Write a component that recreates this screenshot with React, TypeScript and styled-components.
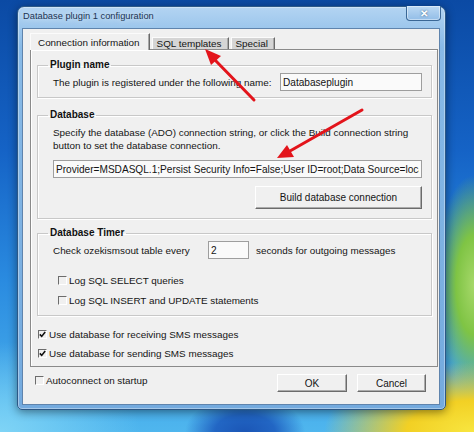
import React from 'react';
import styled, { createGlobalStyle } from 'styled-components';

const GlobalStyle = createGlobalStyle`
  html, body {
    margin: 0;
    padding: 0;
  }
  body {
    font-family: "Liberation Sans", Arial, sans-serif;
    color: #141414;
  }
`;

const Desktop = styled.div`
  position: relative;
  width: 474px;
  height: 432px;
  overflow: hidden;
  box-sizing: border-box;
  padding: 6px 0 0 17px;
  background:
    radial-gradient(ellipse 150px 70px at 100% 100%, #f8e640 0%, #f2d024 45%, rgba(242, 208, 36, 0) 100%),
    radial-gradient(ellipse 60px 36px at 245px 432px, #1b56b6 0%, #2266c4 50%, rgba(34, 102, 196, 0) 100%),
    radial-gradient(ellipse 40px 110px at 100% 285px, #a6d86a 0%, #7fc444 45%, rgba(127, 196, 68, 0) 100%),
    radial-gradient(ellipse 140px 90px at 0% 100%, #7fd4f6 0%, rgba(127, 212, 246, 0) 100%),
    linear-gradient(180deg, #0b4aa4 0%, #1563c6 35%, #2a8be0 65%, #4fb6ee 100%);
`;

const Window = styled.div`
  width: 429px;
  height: 404px;
  box-sizing: border-box;
  border: 1px solid #2c5886;
  border-radius: 7px 7px 5px 5px;
  background: linear-gradient(180deg, #b3d4f2 0%, #88bae7 10%, #74aade 100%);
  box-shadow: inset 0 0 0 1px rgba(255, 255, 255, 0.35), 0 2px 10px rgba(0, 0, 0, 0.45);
  display: flex;
  flex-direction: column;
`;

const TitleBar = styled.div`
  height: 21px;
  display: flex;
  justify-content: space-between;
  align-items: flex-start;
  padding: 0 4px 0 5px;
`;

const Title = styled.span`
  margin-top: 3px;
  font-size: 9.3px;
  line-height: 12px;
  color: #1b3352;
  text-shadow: 0 0 6px rgba(255, 255, 255, 0.8);
`;

const CloseButton = styled.div`
  width: 35px;
  height: 15px;
  margin-top: -1px;
  box-sizing: border-box;
  border: 1px solid #3a6796;
  border-top: none;
  border-radius: 0 0 4px 4px;
  background: linear-gradient(180deg, #bcd9f4 0%, #92bde7 100%);
  box-shadow: inset 0 0 0 1px rgba(255, 255, 255, 0.45);
  display: flex;
  align-items: center;
  justify-content: center;
  color: #fff;
  font-size: 10px;
  font-weight: bold;
  text-shadow: 0 0 2px #33597f;
`;

const Client = styled.div`
  margin: 0 5px 0 4px;
  height: 377px;
  box-sizing: border-box;
  border: 1px solid #5f84ad;
  background: #f0f0f0;
  display: flex;
  flex-direction: column;
  font-size: 9.9px;
`;

const TabStrip = styled.div`
  position: relative;
  z-index: 1;
  height: 20px;
  margin-left: 7px;
  display: flex;
  align-items: flex-end;
`;

const Tab = styled.div<{ $active?: boolean }>`
  box-sizing: border-box;
  line-height: 12px;
  white-space: nowrap;
  border-top: 1px solid #fbfbfb;
  border-left: 1px solid #fbfbfb;
  border-right: 1px solid #6a6a6a;
  height: ${(p) => (p.$active ? '17px' : '12px')};
  margin-bottom: ${(p) => (p.$active ? '-1px' : '0')};
  margin-left: ${(p) => (p.$active ? '0' : '2px')};
  padding: ${(p) => (p.$active ? '3px 9px 0 7px' : '0 6px 0 4px')};
  background: ${(p) => (p.$active ? '#f0f0f0' : '#d5d5d5')};
  box-shadow: inset -1px 0 0 #a8a8a8;
`;

const Panel = styled.div`
  width: 408px;
  height: 318px;
  margin-left: 7px;
  box-sizing: border-box;
  border: 1px solid #8a8a8a;
  box-shadow: inset 1px 1px 0 #fff;
  padding: 9px 5px 0 6px;
  display: flex;
  flex-direction: column;
`;

const Group = styled.fieldset<{ $gap?: number; $pt?: number; $pb?: number }>`
  margin: ${(p) => p.$gap ?? 0}px 0 0 0;
  min-width: 0;
  border: 1px solid #c8c8c8;
  box-shadow: inset 1px 1px 0 #fff, 1px 1px 0 #fff;
  padding: ${(p) => p.$pt ?? 2}px 9px ${(p) => p.$pb ?? 6}px 15px;
  display: flex;
  flex-direction: column;
`;

const Legend = styled.legend`
  margin-left: -5px;
  padding: 0 2px;
  font-size: 10px;
  font-weight: bold;
  line-height: 12px;
  color: #111;
`;

const Row = styled.div<{ $h?: number }>`
  display: flex;
  align-items: center;
  height: ${(p) => p.$h ?? 18}px;
`;

const Spread = styled(Row)`
  justify-content: space-between;
`;

const RightRow = styled(Row)`
  justify-content: flex-end;
  margin-top: 8px;
`;

const Info = styled.p`
  margin: 0;
  line-height: 13px;
`;

const Field = styled.input<{ $w?: number }>`
  width: ${(p) => (p.$w ? `${p.$w}px` : '100%')};
  height: 18px;
  box-sizing: border-box;
  margin: 0;
  padding: 0 2px;
  border: 1px solid #9e9e9e;
  background: #fafafa;
  font-family: "Liberation Sans", Arial, sans-serif;
  font-size: 10.1px;
  color: #141414;
  outline: none;
`;

const WideField = styled(Field)`
  margin-top: 8px;
  flex-shrink: 0;
`;

const FieldLabel = styled.span<{ $w?: number }>`
  width: ${(p) => (p.$w ? `${p.$w}px` : 'auto')};
  flex-shrink: 0;
`;

const After = styled.span`
  margin-left: 7px;
`;

const Button = styled.button<{ $w: number; $h: number }>`
  width: ${(p) => p.$w}px;
  height: ${(p) => p.$h}px;
  box-sizing: border-box;
  margin: 0;
  padding: 0;
  background: #f0f0f0;
  border: none;
  border-top: 1px solid #fff;
  border-left: 1px solid #fff;
  border-right: 1px solid #6b6b6b;
  border-bottom: 1px solid #6b6b6b;
  box-shadow: inset -1px -1px 0 #ababab;
  font-family: "Liberation Sans", Arial, sans-serif;
  font-size: 10px;
  color: #141414;
`;

const CheckRow = styled.label<{ $gap?: number; $indent?: number }>`
  display: flex;
  align-items: center;
  height: 16px;
  margin-top: ${(p) => p.$gap ?? 0}px;
  margin-left: ${(p) => p.$indent ?? 0}px;
  white-space: nowrap;
`;

const Box = styled.span`
  width: 9px;
  height: 9px;
  box-sizing: border-box;
  margin-right: 2px;
  border-top: 1px solid #6c6c6c;
  border-left: 1px solid #6c6c6c;
  border-right: 1px solid #fff;
  border-bottom: 1px solid #fff;
  display: inline-flex;
  align-items: center;
  justify-content: center;
`;

const Footer = styled.div`
  display: flex;
  align-items: flex-start;
  padding: 7px 13px 0 12px;
`;

const FooterCheck = styled(CheckRow)`
  height: 14px;
  margin-top: -1px;
`;

const Buttons = styled.div`
  display: flex;
  gap: 10px;
  margin-left: auto;
`;

const Overlay = styled.svg`
  position: absolute;
  left: 0;
  top: 0;
  pointer-events: none;
`;

const Check: React.FC<{ checked?: boolean; label: string; gap?: number; indent?: number; as?: 'footer' }> = ({
  checked,
  label,
  gap,
  indent,
  as,
}) => {
  const Wrap = as === 'footer' ? FooterCheck : CheckRow;
  return (
    <Wrap $gap={gap} $indent={indent}>
      <Box>
        {checked && (
          <svg width="7" height="7" viewBox="0 0 7 7">
            <path d="M0.8 3.4 L2.7 5.4 L6.2 1" fill="none" stroke="#111" strokeWidth="1.6" />
          </svg>
        )}
      </Box>
      {label}
    </Wrap>
  );
};

const App: React.FC = () => {
  return (
    <Desktop>
      <GlobalStyle />
      <Window>
        <TitleBar>
          <Title>Database plugin 1 configuration</Title>
          <CloseButton>✕</CloseButton>
        </TitleBar>
        <Client>
          <TabStrip>
            <Tab $active>Connection information</Tab>
            <Tab>SQL templates</Tab>
            <Tab>Special</Tab>
          </TabStrip>
          <Panel>
            <Group>
              <Legend>Plugin name</Legend>
              <Spread>
                <span>The plugin is registered under the following name:</span>
                <Field $w={142} defaultValue="Databaseplugin" readOnly />
              </Spread>
            </Group>

            <Group $gap={11} $pt={5} $pb={9}>
              <Legend>Database</Legend>
              <Info>
                Specify the database (ADO) connection string, or click the Build connection string button to set
                the database connection.
              </Info>
              <WideField
                defaultValue="Provider=MSDASQL.1;Persist Security Info=False;User ID=root;Data Source=localhost"
                readOnly
              />
              <RightRow $h={23}>
                <Button $w={167} $h={23}>
                  Build database connection
                </Button>
              </RightRow>
            </Group>

            <Group $gap={8} $pb={7}>
              <Legend>Database Timer</Legend>
              <Row>
                <FieldLabel $w={155}>Check ozekismsout table every</FieldLabel>
                <Field $w={41} defaultValue="2" readOnly />
                <After>seconds for outgoing messages</After>
              </Row>
              <Check label="Log SQL SELECT queries" gap={13} indent={5} />
              <Check label="Log SQL INSERT and UPDATE statements" gap={4} indent={5} />
            </Group>

            <Check checked label="Use database for receiving SMS messages" gap={10} indent={1} />
            <Check checked label="Use database for sending SMS messages" gap={3} indent={1} />
          </Panel>
          <Footer>
            <Check as="footer" label="Autoconnect on startup" />
            <Buttons>
              <Button $w={70} $h={18}>
                OK
              </Button>
              <Button $w={69} $h={18}>
                Cancel
              </Button>
            </Buttons>
          </Footer>
        </Client>
      </Window>

      <Overlay width="474" height="432" viewBox="0 0 474 432">
        <g stroke="#e3141b" strokeWidth="3" strokeLinecap="round" fill="#e3141b">
          <line x1="254" y1="100" x2="215" y2="60" />
          <polygon points="205,49 221,56 211,65" stroke="none" />
          <line x1="362" y1="110" x2="290" y2="151" />
          <polygon points="277,158 287,145 294,157" stroke="none" />
        </g>
      </Overlay>
    </Desktop>
  );
};

export default App;
